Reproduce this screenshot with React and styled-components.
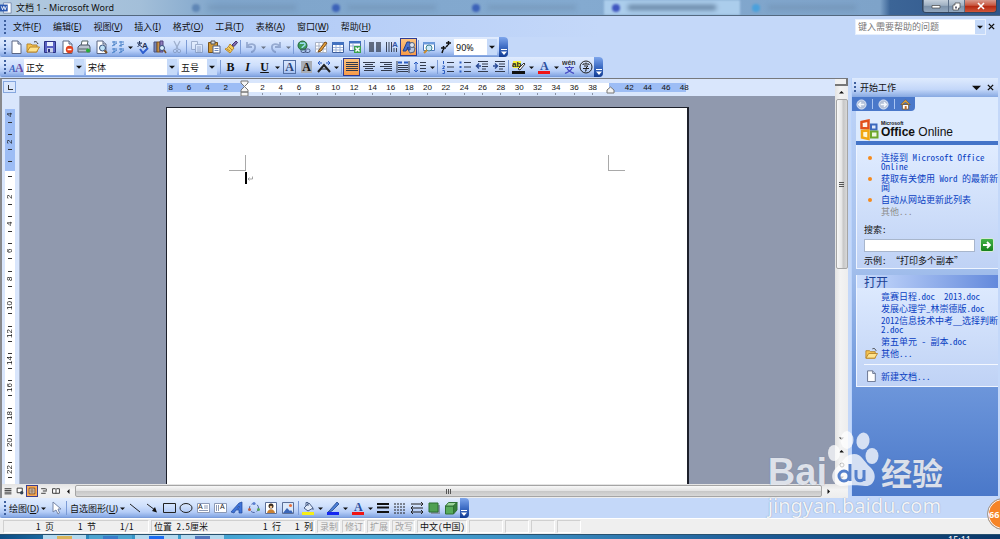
import React, { useState } from "react";
import styled, { createGlobalStyle } from "styled-components";

const uiFont = `"Noto Sans", "Noto Sans CJK SC", sans-serif`;
const songFont = `"Noto Sans Mono CJK SC", "Noto Sans CJK SC", monospace`;

const GlobalStyle = createGlobalStyle`
  * {
    box-sizing: border-box;
  }
  body {
    margin: 0;
    overflow: hidden;
    font-family: ${uiFont};
    font-size: 9px;
    color: #111;
  }
  button, input, select {
    font: inherit;
    color: inherit;
    margin: 0;
    padding: 0;
    border: 0;
    background: none;
    outline: none;
  }
  svg {
    display: block;
    flex: none;
  }
`;

const Window = styled.div`
  position: relative;
  display: flex;
  flex-direction: column;
  height: 100vh;
  overflow: hidden;
  background: #c4d8f9;
`;

/* title bar */

const TitleBar = styled.header`
  display: flex;
  height: 16px;
  flex: none;
  border-bottom: 1px solid #53687f;
  background: linear-gradient(
    90deg,
    #b4cbe0 0%,
    #a3bfd9 14%,
    #7fa5cb 22%,
    #84aad0 58%,
    #7ea3c9 88%,
    #3c6597 89%,
    #2f568a 100%
  );
`;

const TitleText = styled.h1`
  display: flex;
  align-items: center;
  gap: 4px;
  margin: 0;
  font-size: 9px;
  line-height: 15px;
  font-weight: 400;
  white-space: nowrap;
`;

const GlassTabs = styled.div`
  flex: 1;
  display: flex;
  align-items: center;
  justify-content: flex-end;
  gap: 4px;
  overflow: hidden;
`;

const GlassTab = styled.div`
  display: flex;
  align-items: center;
  gap: 8px;
  width: 136px;
  height: 15px;
  padding-left: 8px;
  background: ${(props) => (props.$active ? "#abcdec" : "transparent")};
  filter: blur(1px);

  &::before {
    content: "";
    width: 8px;
    height: 8px;
    border-radius: 4px;
    background: ${(props) => props.$dot};
  }
  &::after {
    content: "";
    width: 88px;
    height: 5px;
    background: ${(props) => (props.$active ? "#44607f" : "#66829f")};
    opacity: ${(props) => (props.$active ? 0.7 : 0.35)};
    filter: blur(2px);
  }
`;

const WindowButtons = styled.div`
  display: flex;
  height: 13px;
  margin: 0 3px 0 42px;
  border: 1px solid #33465f;
  border-top: 0;
  border-radius: 0 0 4px 4px;
  overflow: hidden;
`;

const WindowButton = styled.button`
  display: flex;
  align-items: center;
  justify-content: center;
  width: ${(props) => props.$width}px;
  border-left: 1px solid #5b6f88;
  background: ${(props) =>
    props.$close
      ? "linear-gradient(#d99a8d, #c8563f 45%, #b3260f 50%, #d0573a)"
      : "linear-gradient(#c5d0dc, #9fb0c2 45%, #7c91a9 50%, #93a8bf)"};
`;

/* menu bar */

const MenuBar = styled.nav`
  display: flex;
  align-items: center;
  height: 21px;
  flex: none;
  padding-right: 3px;
  background: linear-gradient(90deg, #a4c1f4, #c4d8f9 60%);
`;

const MenuItems = styled.div`
  display: flex;
  flex: 1;
`;

const MenuItem = styled.button`
  padding: 0 6px;
  line-height: 19px;
  white-space: nowrap;
`;

const HelpBox = styled.div`
  display: flex;
  width: 131px;
  height: 16px;
  background: #fff;
  border: 1px solid #e6effd;
`;

const HelpInput = styled.input`
  flex: 1;
  min-width: 0;
  padding-left: 2px;

  &::placeholder {
    color: #777;
    opacity: 1;
  }
`;

const ArrowButton = styled.button`
  display: flex;
  align-items: center;
  justify-content: center;
  width: ${(props) => props.$width || 10}px;
  background: ${(props) => props.$bg || "none"};
`;

/* toolbars */

const Toolbar = styled.div`
  display: flex;
  width: max-content;
  height: 20px;
  flex: none;
  border-radius: 2px 4px 4px 2px;
  overflow: hidden;
  background: linear-gradient(#e1ecfe, #cfe0fc 40%, #b4ccf7 70%, #86a8e4 94%, #6f92d2);
`;

const Grip = styled.span`
  width: 2px;
  height: ${(props) => props.$height || 14}px;
  margin: 3px 1px 3px 4px;
  background: repeating-linear-gradient(#3d5f9e 0 2px, transparent 2px 4px);
`;

const ToolButton = styled.button`
  display: flex;
  align-items: center;
  justify-content: center;
  gap: 2px;
  width: ${(props) => (props.$wide ? "auto" : "17px")};
  padding: ${(props) => (props.$wide ? "0 2px" : "0")};
  height: 18px;
  margin-top: 1px;
  white-space: nowrap;
  opacity: ${(props) => (props.disabled ? 0.5 : 1)};
  border: ${(props) => (props.$active ? "1px solid #2f3b92" : "0")};
  background: ${(props) => (props.$active ? "linear-gradient(#fdc27c, #f79a48)" : "none")};
`;

const DropButton = styled(ToolButton)`
  width: 8px;
`;

const Divider = styled.span`
  width: 1px;
  height: 14px;
  margin: 3px 1px;
  background: #7b9bd6;
`;

const Overflow = styled.button`
  display: flex;
  align-items: flex-end;
  justify-content: center;
  width: 9px;
  padding-bottom: 2px;
  background: linear-gradient(#7ea6ec, #3d6cc4 50%, #123c93);
`;

const SelectBox = styled.label`
  display: grid;
  grid-template-columns: 1fr 10px;
  align-items: center;
  width: ${(props) => props.$width}px;
  height: 16px;
  margin: 2px 2px 2px 0;
  background: linear-gradient(90deg, #fff 0 calc(100% - 10px), #c6daf9 calc(100% - 10px));
  font-family: ${uiFont};

  select {
    grid-area: 1 / 1 / 2 / 3;
    height: 16px;
    padding-left: 2px;
    appearance: none;
  }
  svg {
    grid-area: 1 / 2;
    justify-self: center;
    pointer-events: none;
  }
`;

const Letter = styled.span`
  font-family: "Liberation Serif", serif;
  font-size: 12px;
  line-height: 12px;
  font-weight: 700;
  font-style: ${(props) => (props.$italic ? "italic" : "normal")};
  text-decoration: ${(props) => (props.$underline ? "underline" : "none")};
  color: ${(props) => props.$color || "#111"};
  padding: ${(props) => (props.$boxed ? "0 1px" : "0")};
  border: ${(props) => (props.$outline ? "1px solid #5470a5" : "0")};
  background: ${(props) => (props.$shade ? "#a9adb5" : "none")};
`;

/* document area */

const Main = styled.div`
  display: flex;
  flex: 1;
  min-height: 0;
  gap: 3px;
  margin-top: 1px;
`;

const DocColumn = styled.div`
  display: flex;
  flex-direction: column;
  flex: 1;
  min-width: 0;
  border-top: 1px solid #77797d;
  border-left: 2px solid #88898c;
  background: #d9e6fc;
`;

const DocRow = styled.div`
  display: flex;
  flex: 1;
  min-height: 0;
`;

const DocBody = styled.div`
  display: flex;
  flex-direction: column;
  flex: 1;
  min-width: 0;
`;

const RulerRow = styled.div`
  display: flex;
  height: 17px;
  flex: none;
`;

const TabSelector = styled.button`
  width: 13px;
  height: 12px;
  margin: 2px 4px 0 1px;
  border: 1px solid #86a7de;
  background: #d9e6fc;

  &::before {
    content: "";
    display: block;
    width: 4px;
    height: 4px;
    margin-left: 4px;
    border-left: 1px solid #333;
    border-bottom: 1px solid #333;
  }
`;

const RulerTrack = styled.div`
  flex: 1;
  display: flex;
  justify-content: center;
  min-width: 0;
`;

const RulerScale = styled.div`
  display: grid;
  grid-template-columns: repeat(29, 1fr);
  width: 532px;
  height: 9px;
  margin-top: 4px;
  background: linear-gradient(
    90deg,
    transparent 0 1%,
    #9dbdf5 1% 15.5%,
    #fff 15.5% 84%,
    #9dbdf5 84% 98.5%,
    transparent 98.5%
  );
`;

const RulerMark = styled.span`
  display: flex;
  flex-direction: column;
  align-items: center;
  font-family: "Liberation Sans", sans-serif;
  font-size: 8px;
  line-height: 9px;
  color: #111;

  &::after {
    content: "";
    width: 1px;
    height: 2px;
    margin-top: 1px;
    background: ${(props) => (props.$tick ? "#8a93a5" : "transparent")};
  }
  svg {
    margin-top: ${(props) => (props.$low ? 3 : -3)}px;
  }
`;

const CanvasRow = styled.div`
  display: flex;
  flex: 1;
  min-height: 0;
`;

const VerticalRuler = styled.div`
  display: flex;
  flex-direction: column;
  width: 10px;
  margin: 5px 4px 0 3px;
  background: linear-gradient(transparent 0 8px, #9dbdf5 8px 70px, #fff 70px);
`;

const VerticalMark = styled.span`
  flex: 1;
  display: flex;
  flex-direction: column;
  align-items: center;
  justify-content: center;
  gap: 2px;
  min-height: 0;

  &::before,
  &::after {
    content: "";
    width: 4px;
    height: 1px;
    background: #333;
  }
  &:first-child::before {
    background: none;
  }
`;

const Rotated = styled.span`
  display: flex;
  align-items: center;
  justify-content: center;
  height: 10px;
  writing-mode: vertical-rl;
  transform: rotate(180deg);
  font-family: "Liberation Sans", sans-serif;
  font-size: 8px;
  line-height: 10px;
`;

const Canvas = styled.main`
  display: flex;
  flex: 1;
  justify-content: center;
  min-width: 0;
  padding-top: 11px;
  overflow: hidden;
  background: #9099ae;
  border-left: 1px solid #a9b5cb;
`;

const Page = styled.article`
  width: 523px;
  padding: 47px 62px 0;
  background: #fff;
  border: solid #1c1f2a;
  border-width: 1px 2px 0 1px;
`;

const MarginMarks = styled.div`
  display: flex;
  justify-content: space-between;
`;

const Corner = styled.span`
  width: 17px;
  height: 16px;
  border: solid #a9a9a9;
  border-width: ${(props) => (props.$right ? "0 0 1px 1px" : "0 1px 1px 0")};
`;

const Caret = styled.div`
  display: flex;
  align-items: center;
  height: 12px;
  margin: 1px 0 0 16px;
  border-left: 2px solid #000;
`;

/* scroll bars */

const VScroll = styled.div`
  display: flex;
  flex-direction: column;
  align-items: center;
  justify-content: space-between;
  width: 13px;
  background: linear-gradient(90deg, #e3e3e3, #f3f3f3 40%, #ededed);
`;

const VScrollTop = styled.div`
  display: flex;
  flex-direction: column;
  align-items: center;
  width: 100%;
`;

const SplitBox = styled.span`
  width: 13px;
  height: 7px;
  background: #f0f0f0;
  border: solid #777;
  border-width: 0 2px 2px 0;
`;

const ScrollButton = styled.button`
  display: flex;
  align-items: center;
  justify-content: center;
  width: 13px;
  height: 13px;
`;

const VThumb = styled.div`
  display: flex;
  align-items: center;
  justify-content: center;
  width: 12px;
  height: 170px;
  border: 1px solid #a5a5a5;
  border-radius: 2px;
  background: linear-gradient(90deg, #f8f8f8, #e4e4e4 50%, #c6c6c6 60%, #d8d8d8);
`;

const ScrollNav = styled.div`
  display: flex;
  flex-direction: column;
`;

const HScroll = styled.div`
  display: flex;
  align-items: center;
  height: 14px;
  flex: none;
  background: linear-gradient(#e3e3e3, #f3f3f3 40%, #ededed);
`;

const ViewButton = styled.button`
  display: flex;
  align-items: center;
  justify-content: center;
  width: 12px;
  height: 12px;
  border: 1px solid ${(props) => (props.$active ? "#3b3f91" : "transparent")};
  background: ${(props) => (props.$active ? "#f9a954" : "none")};
`;

const HThumb = styled.div`
  flex: 1;
  display: flex;
  align-items: center;
  justify-content: center;
  height: 12px;
  border: 1px solid #a5a5a5;
  border-radius: 2px;
  background: linear-gradient(#f8f8f8, #e4e4e4 45%, #c8c8c8 55%, #d8d8d8);
`;

/* task pane */

const Pane = styled.aside`
  display: flex;
  flex-direction: column;
  width: 147px;
  margin: 0 2px 2px 0;
  border-left: 1px solid #b9d2fb;
  background: linear-gradient(#c0d5f9, #a3bfec 45%, #6f98dc 72%, #4a78c9);
`;

const PaneHeader = styled.div`
  display: flex;
  align-items: center;
  height: 19px;
  gap: 4px;
  padding-right: 3px;
  background: linear-gradient(#dfebfe, #c3d7f9 60%, #87a9e2);

  ${Grip} {
    margin: 0 0 0 2px;
  }
`;

const PaneTitle = styled.h2`
  flex: 1;
  margin: 0;
  font-family: ${songFont};
  font-size: 9px;
  font-weight: 400;
  line-height: 18px;
`;

const PaneNav = styled.div`
  display: flex;
  height: 14px;
  background: #dceafe;
`;

const NavTab = styled.div`
  display: flex;
  align-items: center;
  gap: 4px;
  width: 63px;
  padding-left: 4px;
  border-radius: 0 0 4px 0;
  background: #4a78ca;
`;

const NavLine = styled.span`
  width: 1px;
  height: 10px;
  margin: 0 1px;
  background: #a9c4f2;
`;

const PlainButton = styled.button`
  display: flex;
  align-items: center;
  justify-content: center;
  min-width: 10px;
`;

const Brand = styled.div`
  display: flex;
  align-items: center;
  gap: 1px;
  height: 34px;
  margin-left: 4px;
  padding: 7px 0 0 4px;
  border-bottom: 4px solid #4474c8;
  background: #dceafe;
`;

const BrandText = styled.div`
  display: flex;
  flex-direction: column;
  font-family: "Liberation Sans", sans-serif;
  color: #111;
`;

const BrandSmall = styled.span`
  font-size: 5px;
  line-height: 5px;
  font-weight: 700;
`;

const BrandLarge = styled.span`
  font-size: 12px;
  line-height: 12px;
  white-space: nowrap;
`;

const Card = styled.section`
  margin: 0 0 ${(props) => props.$gap || 0}px 4px;
  padding: ${(props) => (props.$titled ? "0" : "8px 0 2px")};
  border: solid #eef4ff;
  border-width: 0 0 1px 1px;
  background: linear-gradient(#e0ecff, #bfd2f5);
  font-family: ${songFont};
`;

const CardTitle = styled.h3`
  margin: 0 0 4px;
  padding-left: 7px;
  font-family: ${songFont};
  font-size: 12px;
  line-height: 13px;
  font-weight: 400;
  color: #1c3f94;
  background: linear-gradient(90deg, #cbddfd, #6389dc);
`;

const LinkList = styled.ul`
  display: flex;
  flex-direction: column;
  gap: ${(props) => props.$gap}px;
  margin: 0;
  padding: 0;
  list-style: none;
`;

const LinkItem = styled.li`
  display: grid;
  grid-template-columns: 12px 1fr;
  column-gap: 4px;
  padding-left: 8px;
  line-height: 9px;
`;

const Bullet = styled.span`
  width: 4px;
  height: 4px;
  margin: 3px 0 0 3px;
  border-radius: 2px;
  background: #f58a1c;
`;

const IconSlot = styled.span`
  display: block;
  height: 9px;

  svg {
    margin-top: -2px;
  }
`;

const PaneLink = styled.a`
  color: ${(props) => (props.$muted ? "#8d8d8d" : "#0a3fc2")};
  text-decoration: none;
  white-space: pre-wrap;
  overflow-wrap: anywhere;
`;

const SearchForm = styled.form`
  display: flex;
  flex-direction: column;
  gap: 3px;
  padding: 8px 4px 0 7px;
  line-height: 11px;
`;

const SearchRow = styled.div`
  display: flex;
  align-items: center;
  gap: 5px;
`;

const SearchInput = styled.input`
  flex: 1;
  min-width: 0;
  height: 13px;
  background: #fff;
  border: 1px solid #a8b6cc;
`;

const GoButton = styled.button`
  display: flex;
  align-items: center;
  justify-content: center;
  width: 14px;
  height: 14px;
  border: 1px solid #d6ead6;
  border-radius: 2px;
  background: linear-gradient(#43b247, #17821c);
`;

const Rule = styled.hr`
  margin: 6px 0 7px 7px;
  border: 0;
  border-top: 1px solid #f4f8ff;
`;

const CardFoot = styled.div`
  padding-bottom: 5px;
`;

/* status bar and task bar */

const StatusBar = styled.footer`
  display: flex;
  align-items: center;
  gap: 2px;
  height: 16px;
  flex: none;
  padding-left: 3px;
  border-top: 1px solid #fff;
  background: #efefef;
  font-family: ${songFont};
`;

const StatusCell = styled.div`
  display: flex;
  align-items: center;
  gap: ${(props) => props.$gap || 0}px;
  min-width: ${(props) => props.$width}px;
  height: 13px;
  padding: 0 1px 0 ${(props) => props.$indent || 2}px;
  border: 1px solid;
  border-color: #d0d0d0 #fff #fff #d0d0d0;
  white-space: pre;
  color: ${(props) => (props.$off ? "#a2a2a2" : "#111")};
`;

const Push = styled.span`
  margin-left: auto;
`;

const TaskBar = styled.div`
  display: flex;
  gap: 3px;
  height: 5px;
  flex: none;
  padding: 0 29px 0 43px;
  overflow: hidden;
  border-top: 1px solid #27516f;
  background: radial-gradient(ellipse at 20px 6px, #b9cfdd 0 10px, transparent 14px),
    linear-gradient(90deg, #0d4c84, #2f8fc4 10%, #53b1dc 30%, #3f93c6 50%, #1d5c97 75%, #0a3768);
`;

const TaskButton = styled.span`
  width: 43px;
  padding: 1px 14px 0;
  background: ${(props) => (props.$open ? "#b5d9ee" : "#4da4d0")};

  &::before {
    content: "";
    display: block;
    height: 4px;
    background: ${(props) => props.$color};
  }
`;

const Clock = styled.time`
  margin-left: auto;
  line-height: 9px;
  color: #fff;
`;

const Bubble = styled.button`
  position: absolute;
  right: -19px;
  bottom: 9px;
  width: 32px;
  height: 32px;
  padding-left: 1px;
  text-align: left;
  border-radius: 16px;
  border: 1px solid #9b9b9b;
  color: #fff;
  font-weight: 700;
  background: #f68426;
  box-shadow: inset 0 0 0 1px #fff;
`;

const Watermark = styled.div`
  position: absolute;
  right: 57px;
  bottom: 20px;
  display: flex;
  flex-direction: column;
  color: rgba(255, 255, 255, 0.78);
  pointer-events: none;
  text-shadow: 0 0 1px rgba(90, 110, 150, 0.8);
`;

const WatermarkTop = styled.div`
  display: flex;
  align-items: flex-end;
  height: 57px;
  margin-bottom: 6px;
`;

const WatermarkBai = styled.span`
  font-family: "Liberation Sans", sans-serif;
  font-size: 38px;
  line-height: 38px;
  height: 34px;
  font-weight: 700;
`;

const WatermarkCn = styled.span`
  margin-left: 2px;
  font-family: "Noto Sans CJK SC", sans-serif;
  font-size: 31px;
  line-height: 31px;
  font-weight: 700;
`;

const WatermarkUrl = styled.span`
  font-size: 20px;
  line-height: 26px;
  color: rgba(255, 255, 255, 0.92);
`;

const Triangle = ({ dir = "down", size = 5, color = "#111" }) => {
  const shapes = {
    down: "M0 3h10L5 8z",
    up: "M0 7h10L5 2z",
    left: "M7 0v10L2 5z",
    right: "M3 0v10l5-5z",
  };
  return (
    <svg width={size} height={size} viewBox="0 0 10 10" aria-hidden="true">
      <path d={shapes[dir]} fill={color} />
    </svg>
  );
};

const sheet = (
  <>
    <path d="M3 1h6l3 3v9.500H3z" fill="#fff" stroke="#5a6683" />
    <path d="M9 1v3h3" fill="#cbd8ee" stroke="#5a6683" />
  </>
);

const lines = (rows) => (
  <path d={rows.map(([x, y, w]) => `M${x} ${y}h${w}`).join("")} stroke="#333b4d" strokeWidth="1" />
);

const icons = {
  new: sheet,
  open: (
    <>
      <path d="M1 12V4h4l1 1h5v7z" fill="#f5c451" stroke="#b8862c" />
      <path d="M1 12l3-5h9.500l-3 5z" fill="#ffe38d" stroke="#b8862c" />
      <path d="M8 2c2-1 3 0 4 2" stroke="#333" fill="none" />
    </>
  ),
  save: (
    <>
      <path d="M1.500 1.500h11v11h-11z" fill="#5a62c4" stroke="#2b3184" />
      <path d="M4 2h6v4H4z" fill="#e9efff" />
      <path d="M4 8h6v4.500H4z" fill="#c9d1ea" />
      <path d="M5 9h2v3H5z" fill="#2b3184" />
    </>
  ),
  permission: (
    <>
      {sheet}
      <circle cx="9.500" cy="9.500" r="3.700" fill="#e2401d" />
      <path d="M7.500 9.500h4" stroke="#fff" strokeWidth="1.500" />
    </>
  ),
  print: (
    <>
      <path d="M4 6l1-5h6l-1 5z" fill="#fff" stroke="#566" />
      <path d="M1 7l2-2h9l1 2v5H1z" fill="#b9c2cf" stroke="#4a5467" />
      <path d="M2 9h9" stroke="#566" />
      <circle cx="11" cy="10.500" r="2" fill="#27ae35" />
    </>
  ),
  preview: (
    <>
      {sheet}
      <circle cx="8.500" cy="8" r="3" fill="#bfe2f7" stroke="#35507c" />
      <path d="M10.500 10.500L13 13" stroke="#7a5225" strokeWidth="2" />
    </>
  ),
  translate: (
    <>
      <path d="M1 2h5M3 1v5M1 6l5-3M8 2h5M10 1v6M8 6l5-2M1 9h5M3 8v5M1 13l5-3M8 9h5M10 8v5M8 13l5-3" stroke="#4c83c9" fill="none" />
    </>
  ),
  spelling: (
    <>
      <path d="M1 3h5M3.500 1v3M1.500 7l4-4M2 4l4 3" stroke="#26365c" fill="none" />
      <text x="6" y="8" fontSize="8" fontWeight="700" fontFamily="Liberation Sans" fill="#26365c">A</text>
      <path d="M4 9l3 4 5-5" stroke="#2f5fd0" strokeWidth="2" fill="none" />
    </>
  ),
  research: (
    <>
      <path d="M1 2h3v10H1z" fill="#7585b7" stroke="#47517f" />
      <path d="M4 2h3v10H4z" fill="#c89347" stroke="#7c5521" />
      <path d="M7 1h3v11H7z" fill="#8f7fbd" stroke="#51437f" />
      <circle cx="9" cy="8" r="2.500" fill="#d9eefb" stroke="#35507c" />
      <path d="M11 10l2 3" stroke="#7a5225" strokeWidth="1.500" />
    </>
  ),
  cut: (
    <>
      <path d="M4 1l4 8M10 1L6 9" stroke="#6d7f9f" strokeWidth="1.300" />
      <circle cx="5" cy="11" r="1.700" fill="none" stroke="#6d7f9f" />
      <circle cx="9" cy="11" r="1.700" fill="none" stroke="#6d7f9f" />
    </>
  ),
  copy: (
    <>
      <path d="M1.500 1.500h6v8h-6z" fill="#eef3fc" stroke="#6d7f9f" />
      <path d="M5.500 4.500h7v8h-7z" fill="#eef3fc" stroke="#6d7f9f" />
      <path d="M7 7h4M7 9h4M7 11h4" stroke="#6d7f9f" />
    </>
  ),
  paste: (
    <>
      <path d="M1.500 2.500h9v10h-9z" fill="#d39a35" stroke="#79531a" />
      <path d="M4 1h4v3H4z" fill="#d7dbe3" stroke="#555" />
      <path d="M6 6h7v7H6z" fill="#fff" stroke="#4d5f86" />
      <path d="M7.500 8.500h4M7.500 10.500h4" stroke="#6d86ba" />
    </>
  ),
  painter: (
    <>
      <path d="M8 5l4-4 1.500 1.500-3.500 4z" fill="#7e6bb0" stroke="#43346e" />
      <path d="M6 4l4 4-4 5-5-4c2 0 4-3 5-5z" fill="#f2cd60" stroke="#b8862c" />
      <path d="M3 9l3 2M5 7l3 3" stroke="#b8862c" />
    </>
  ),
  undo: <path d="M3 2v5h5M3 7c2-4 9-4 8 1 0 2-2 4-4 4" fill="none" stroke="#5e76a6" strokeWidth="1.800" />,
  redo: <path d="M11 2v5H6M11 7C9 3 2 3 3 8c0 2 2 4 4 4" fill="none" stroke="#5e76a6" strokeWidth="1.800" />,
  link: (
    <>
      <circle cx="5.500" cy="5.500" r="4.500" fill="#3d9b58" stroke="#22663b" />
      <path d="M3 3c2 1 4-1 5 1s-3 2-3 4" stroke="#9adcf2" fill="none" strokeWidth="1.500" />
      <rect x="4" y="9" width="5" height="3.500" rx="1.700" fill="none" stroke="#465981" />
      <rect x="8" y="9" width="5" height="3.500" rx="1.700" fill="none" stroke="#465981" />
    </>
  ),
  tablesBorders: (
    <>
      <path d="M1.500 2.500h11v10h-11zM5 2.500v10M9 2.500v10M1.500 6h11M1.500 9h11" fill="#fff" stroke="#a9b3c6" />
      <path d="M5 10l6-8 2 1-6 8-3 1z" fill="#e9a23a" stroke="#7b4c18" />
    </>
  ),
  table: (
    <>
      <path d="M1.500 2.500h11v10h-11z" fill="#fff" stroke="#3f5f9c" />
      <path d="M1 2h12v3H1z" fill="#4271c0" />
      <path d="M5 5v7M9 5v7M2 7.500h10M2 10h10" stroke="#9bb1d8" />
    </>
  ),
  excel: (
    <>
      <path d="M1.500 1.500h11v9h-11z" fill="#fff" stroke="#4a6ba6" />
      <path d="M1 1h12v2.500H1z" fill="#4271c0" />
      <path d="M5 3v7M2 6h10" stroke="#9bb1d8" />
      <path d="M6 6h7v7H6z" fill="#3ba24d" />
      <path d="M7.500 7.500l4 4M11.500 7.500l-4 4" stroke="#fff" strokeWidth="1.500" />
    </>
  ),
  columns: (
    <path d="M1 3h5M1 5h5M1 7h5M1 9h5M1 11h5M8 3h5M8 5h5M8 7h5M8 9h5M8 11h5" stroke="#3b4457" strokeWidth="1.300" />
  ),
  textDirection: (
    <>
      <path d="M1.500 2v10M4 2v10M6.500 2v10M9 8v4M11.500 8v4" stroke="#3b4457" />
      <text x="7" y="7" fontSize="8" fontWeight="700" fontFamily="Liberation Sans" fill="#3558a8">A</text>
    </>
  ),
  drawing: (
    <>
      <path d="M5 8l4-2 4 2-1 4-4 1z" fill="#b8c5dd" stroke="#53617d" />
      <path d="M1 11L5 2h3v8H6V7L4 11z" fill="#4b72cf" stroke="#233f8a" />
      <circle cx="10" cy="5" r="2.500" fill="#dce3ef" stroke="#53617d" />
    </>
  ),
  map: (
    <>
      <path d="M1.500 2.500h11v8h-11z" fill="#fff" stroke="#4a78ba" />
      <path d="M1 2h12v2.500H1z" fill="#6c9adb" />
      <circle cx="7" cy="8" r="3" fill="#cdeafa" stroke="#3d8290" />
      <path d="M5 10l-3 3" stroke="#c98c2b" strokeWidth="2" />
    </>
  ),
  marks: (
    <>
      <path d="M7 3h5M9.500 1v4M2 8h5M4.500 6v4" stroke="#111" strokeWidth="1.500" />
      <path d="M9 5L7 7M4 10l-1 3" stroke="#111" strokeWidth="1.500" />
    </>
  ),
  styles: (
    <>
      <text x="0" y="12" fontSize="10" fontStyle="italic" fontWeight="700" fontFamily="Liberation Serif" fill="#3f64bf">A</text>
      <text x="6" y="12" fontSize="12" fontWeight="700" fontFamily="Liberation Serif" fill="#6a4ea5">A</text>
    </>
  ),
  charScale: (
    <>
      <path d="M1 12l6-7 6 7" stroke="#222" strokeWidth="2" fill="none" />
      <path d="M4 9h6" stroke="#222" />
      <path d="M1 3h4M9 3h4M3 1L1 3l2 2M11 1l2 2-2 2" stroke="#2c5cc0" fill="none" />
    </>
  ),
  justify: lines([[1, 2.5, 12], [1, 4.5, 12], [1, 6.5, 12], [1, 8.5, 12], [1, 10.5, 12]]),
  center: lines([[1, 2.5, 12], [3, 4.5, 8], [1, 6.5, 12], [3, 8.5, 8], [2, 10.5, 10]]),
  right: lines([[1, 2.5, 12], [5, 4.5, 8], [1, 6.5, 12], [5, 8.5, 8], [2, 10.5, 11]]),
  distribute: (
    <>
      {lines([[2, 5.5, 10], [2, 7.5, 10], [2, 9.5, 10], [2, 11.5, 10]])}
      <path d="M1 1v12M13 1v12" stroke="#333b4d" />
      <path d="M2 2.500h4M8 2.500h4" stroke="#2c5cc0" strokeWidth="2" />
    </>
  ),
  spacing: (
    <>
      {lines([[7, 2.5, 6], [7, 5.5, 6], [7, 8.5, 6], [7, 11.5, 6]])}
      <path d="M3 2v10M1 4l2-2 2 2M1 10l2 2 2-2" stroke="#2c5cc0" fill="none" />
    </>
  ),
  numbers: (
    <>
      {lines([[6, 2.5, 7], [6, 7, 7], [6, 11.5, 7]])}
      <path d="M2.500 1v3M1.500 6h2v1l-2 1.500h2M1.500 10.500h2v3h-2" stroke="#2c5cc0" fill="none" />
    </>
  ),
  bullets: (
    <>
      {lines([[6, 2.5, 7], [6, 7, 7], [6, 11.5, 7]])}
      <path d="M1.500 1.500h2v2h-2zM1.500 6h2v2h-2zM1.500 10.500h2v2h-2z" fill="#2c5cc0" />
    </>
  ),
  outdent: (
    <>
      {lines([[3, 1.5, 10], [7, 4, 6], [7, 6.5, 6], [7, 9, 4], [3, 11.5, 10]])}
      <path d="M6 6H2M4 3.500L1.500 6 4 8.500" stroke="#2c4c96" strokeWidth="1.500" fill="none" />
    </>
  ),
  indent: (
    <>
      {lines([[3, 1.5, 10], [7, 4, 6], [7, 6.5, 6], [7, 9, 4], [3, 11.5, 10]])}
      <path d="M1 6h4M3 3.500L5.500 6 3 8.500" stroke="#2c4c96" strokeWidth="1.500" fill="none" />
    </>
  ),
  highlight: (
    <>
      <path d="M1 1h8v7H1z" fill="#f5ef3c" />
      <text x="0" y="7" fontSize="8" fontWeight="700" fontFamily="Liberation Sans" fill="#222">ab</text>
      <path d="M6 9l6-6 1 1-5 6z" fill="#fff" stroke="#333" />
      <path d="M0 11h13v3H0z" fill="#111" />
    </>
  ),
  fontColor: (
    <>
      <text x="3" y="10" fontSize="12" fontWeight="700" fontFamily="Liberation Serif" fill="#2c4f9e">A</text>
      <path d="M1 11h12v3H1z" fill="#f01414" />
    </>
  ),
  pinyin: (
    <>
      <text x="0" y="5" fontSize="7" fontWeight="700" fontFamily="Liberation Sans" fill="#333">wén</text>
      <path d="M3 7.500h9M7.500 6v1.500M5 8c1 3 4 4 7 5.500M10 8c-1 3-4 4-7 5.500" stroke="#4a4fc4" fill="none" strokeWidth="1.200" />
    </>
  ),
  enclose: (
    <>
      <circle cx="7" cy="7" r="6" fill="none" stroke="#222" />
      <path d="M4 5V4h6v1M5 6h4L7 8v3H6M4 8.500h6M7 2.500V4" stroke="#222" fill="none" />
    </>
  ),
  pointer: <path d="M4 1v10l3-2 2 4 1.500-1L9 8h3z" fill="#fff" stroke="#7484a6" />,
  line: <path d="M2 3l10 8" stroke="#222" />,
  arrow: (
    <>
      <path d="M2 3l8 6" stroke="#222" />
      <path d="M12 11.500L7 10l3-4z" fill="#111" />
    </>
  ),
  rect: <path d="M1.500 2.500h12v9h-12z" fill="none" stroke="#222" />,
  oval: <ellipse cx="7" cy="7" rx="6" ry="4.500" fill="none" stroke="#222" />,
  textBox: (
    <>
      <path d="M1.500 2.500h12v9h-12z" fill="#fff" stroke="#8b99b5" />
      <text x="2" y="8" fontSize="7" fontFamily="Liberation Sans" fill="#222">A</text>
      <path d="M8 5h4M8 7h4M3 9.500h9" stroke="#8b99b5" />
    </>
  ),
  verticalText: (
    <>
      <path d="M1.500 2.500h12v9h-12z" fill="#fff" stroke="#8b99b5" />
      <text x="7" y="8" fontSize="7" fontFamily="Liberation Sans" fill="#222">A</text>
      <path d="M3.500 4v6M5.500 4v6" stroke="#8b99b5" />
    </>
  ),
  wordArt: <path d="M1 11L9 2l3-1v11H9V9H6l-2 3zM7.500 7H9V5z" fill="#3f74d8" stroke="#21479b" strokeWidth="0.700" />,
  diagram: (
    <>
      <circle cx="7" cy="7" r="4.500" fill="none" stroke="#4d63a3" strokeDasharray="4 2" />
      <circle cx="7" cy="2.500" r="1.500" fill="#5a7fd1" />
      <circle cx="2.500" cy="8.500" r="1.500" fill="#c35b3a" />
      <circle cx="11.500" cy="8.500" r="1.500" fill="#5aa659" />
    </>
  ),
  clipArt: (
    <>
      <path d="M1.500 1.500h11v11h-11z" fill="#fff" stroke="#5b6f98" />
      <circle cx="7" cy="5" r="2.500" fill="#3a2c20" />
      <path d="M3 12c1-5 7-5 8 0z" fill="#c98134" />
      <circle cx="7" cy="6" r="1.300" fill="#f0bf8b" />
    </>
  ),
  picture: (
    <>
      <path d="M1.500 1.500h11v11h-11z" fill="#dbe9fb" stroke="#5b6f98" />
      <path d="M2 12l4-5 3 3 1-1 2 3z" fill="#3b66b8" />
      <circle cx="9.500" cy="4.500" r="1.500" fill="#e8703a" />
    </>
  ),
  fill: (
    <>
      <path d="M3 7l5-5 4 5-5 3z" fill="#e3ecfa" stroke="#4d6188" />
      <path d="M5 5V1.500h2V5M12 7v2" stroke="#4d6188" fill="none" />
      <path d="M1 11h12v3H1z" fill="#f6ee17" />
    </>
  ),
  lineColor: (
    <>
      <path d="M4 9l7-8 2 2-7 7-4 1z" fill="#4b7fd6" stroke="#27498b" strokeWidth="0.800" />
      <path d="M1 11h12v3H1z" fill="#1527f0" />
    </>
  ),
  lineStyle: <path d="M1 3h12M1 6.500h12M1 11h12" stroke="#111" strokeWidth="2" />,
  dashStyle: <path d="M1 3h12M1 6h12M1 9h12M1 12h12" stroke="#222" strokeDasharray="2 1" />,
  arrowStyle: (
    <path d="M1 3h12M11 1l2 2-2 2M1 7h12M3 5L1 7l2 2M1 11h12M11 9l2 2-2 2M3 9l-2 2 2 2" stroke="#222" fill="none" />
  ),
  shadow: (
    <>
      <path d="M4 4h9v9H4z" fill="#8593ab" />
      <path d="M2 2h9v9H2z" fill="#4fa053" stroke="#2b6c31" />
    </>
  ),
  cube: (
    <>
      <path d="M1.500 5h8v8h-8z" fill="#57ab5b" stroke="#2f7135" />
      <path d="M1.500 5l3-3.500H13L9.500 5z" fill="#9bd39a" stroke="#2f7135" />
      <path d="M9.500 13V5L13 1.500V9z" fill="#357e3b" stroke="#2f7135" />
    </>
  ),
  home: (
    <>
      <path d="M3 7h8v6H3z" fill="#fff" stroke="#6b4a1e" />
      <path d="M1 7l6-6 6 6H11L7 4 3 7z" fill="#f2b13c" stroke="#6b4a1e" strokeWidth="0.700" />
      <path d="M6 9h2.500v4H6z" fill="#c2702a" />
    </>
  ),
  normalView: <path d="M1 3h12M1 6h12M1 9h12M1 12h12" stroke="#222" strokeWidth="1.500" />,
  webView: (
    <>
      <path d="M2 2h9v8H2z" fill="#fff" stroke="#222" strokeWidth="1.500" />
      <circle cx="10" cy="10" r="3" fill="#345" />
    </>
  ),
  printView: <path d="M2 2h10v10H2zM4 5h6M4 7h6M4 9h6" fill="#fff" stroke="#6b3b10" strokeWidth="1.500" />,
  outlineView: <path d="M2 3h8M5 7h7M2 11h8M11 3v3" stroke="#222" strokeWidth="1.500" fill="none" />,
  readView: <path d="M1 3h5l1 1 1-1h5v8H8l-1 1-1-1H1zM7 4v8" fill="#fff" stroke="#222" strokeWidth="1.500" />,
  returnMark: <path d="M11 3v5H2M5 5L2 8l3 3" stroke="#8a8a8a" strokeWidth="1.500" fill="none" />,
  word: (
    <>
      <path d="M4 1h9v12H4z" fill="#fff" stroke="#7286ad" />
      <path d="M0 3h9v8H0z" fill="#2a58b0" />
      <path d="M1.500 5l1.500 4 1.500-4L6 9l1.500-4" stroke="#fff" fill="none" />
    </>
  ),
};

const Icon = ({ name, size = 14 }) => (
  <svg width={size} height={size} viewBox="0 0 14 14" fill="none" aria-hidden="true">
    {icons[name]}
  </svg>
);

const Cross = ({ size = 7, color = "#111" }) => (
  <svg width={size} height={size} viewBox="0 0 8 8" aria-hidden="true">
    <path d="M1 1l6 6M7 1L1 7" stroke={color} strokeWidth="1.600" />
  </svg>
);

const NavCircle = ({ flip }) => (
  <svg width="11" height="11" viewBox="0 0 12 12" aria-hidden="true">
    <circle cx="6" cy="6" r="5" fill="#b3c0d8" stroke="#dfe8f8" />
    <path
      d={flip ? "M3 6h6M6.500 3.500L9 6 6.500 8.500" : "M9 6H3M5.500 3.500L3 6l2.500 2.500"}
      stroke="#f5f9ff"
      strokeWidth="1.500"
      fill="none"
    />
  </svg>
);

const OfficeLogo = () => (
  <svg width="20" height="22" viewBox="0 0 20 22" aria-hidden="true">
    <path d="M1.500 3l7-1.500v8l-7-.5z" fill="#fff3ea" stroke="#e2501b" strokeWidth="2.500" />
    <path d="M11 5.500h5.500v5H11z" fill="#dfe9fb" stroke="#3b68bd" strokeWidth="2" />
    <path d="M2 12l6.500-.5V20L2 18.500z" fill="#fff7d6" stroke="#f2a712" strokeWidth="2.500" />
    <path d="M11 12.500h6.500v6H11z" fill="#eef7df" stroke="#6da72c" strokeWidth="2" />
  </svg>
);

const Paw = () => (
  <svg width="52" height="57" viewBox="0 0 52 57" aria-hidden="true">
    <g fill="#fff" fillOpacity="0.75">
      <ellipse cx="7" cy="23" rx="6" ry="8" />
      <ellipse cx="20" cy="10" rx="6.500" ry="9" />
      <ellipse cx="36" cy="11" rx="6.500" ry="8.500" transform="rotate(10 36 11)" />
      <ellipse cx="45" cy="26" rx="6.500" ry="8" />
      <path d="M27 24c8 0 10 8 16 13 9 8 4 20-5 19-5-1-17-1-22 0-9 1-15-10-7-18 6-5 9-14 18-14z" />
    </g>
    <g fill="none" stroke="#5580cb" strokeWidth="3">
      <circle cx="17" cy="46" r="5" />
      <path d="M23 34v17M29 40v7c0 5 8 5 8 0v-7M37 40v11" />
    </g>
  </svg>
);

const ScrollLines = ({ vertical }) => (
  <svg width="7" height="7" viewBox="0 0 7 7" aria-hidden="true">
    <path d={vertical ? "M1.500 1v5M3.500 1v5M5.500 1v5" : "M1 1.500h5M1 3.500h5M1 5.500h5"} stroke="#555" />
  </svg>
);

const menus = [
  ["文件", "F"],
  ["编辑", "E"],
  ["视图", "V"],
  ["插入", "I"],
  ["格式", "O"],
  ["工具", "T"],
  ["表格", "A"],
  ["窗口", "W"],
  ["帮助", "H"],
];

const standardTools = [
  "new", "open", "save", "permission", "print", "preview", "translate", "drop",
  "spelling", "research", "cut*", "|",
  "copy*", "paste", "painter", "|",
  "undo*", "drop*", "redo*", "drop*", "|",
  "link", "tablesBorders", "table", "excel", "|",
  "columns", "textDirection", "drawing!", "|",
  "map", "marks",
];

const paragraphTools = [
  "charScale", "drop", "|",
  "justify!", "center", "right", "distribute", "spacing", "drop", "|",
  "numbers", "bullets", "outdent", "indent", "|",
  "highlight", "drop", "fontColor", "drop", "pinyin", "enclose",
];

const drawTools = [
  "line", "arrow", "rect", "oval", "textBox", "verticalText", "wordArt", "diagram",
  "clipArt", "picture", "|",
  "fill", "drop", "lineColor", "drop", "fontColor", "drop",
  "lineStyle", "dashStyle", "arrowStyle", "shadow", "cube",
];

const recentFiles = [
  "竟赛日程.doc  2013.doc",
  "发展心理学_林崇德版.doc",
  "2012信息技术中考＿选择判断2.doc",
  "第五单元 - 副本.doc",
];

const horizontalMarks = Array.from({ length: 29 }, (_, i) => (i - 4) * 2);
const verticalMarks = Array.from({ length: 14 }, (_, i) => (i - 2) * 2);
const views = ["normalView", "webView", "printView", "outlineView", "readView"];

const Tools = ({ items }) =>
  items.map((item, index) => {
    const name = item.replace(/[*!]/, "");
    const disabled = item.endsWith("*");
    if (name === "|") return <Divider key={index} />;
    if (name === "drop") {
      return (
        <DropButton key={index} aria-label="more" disabled={disabled}>
          <Triangle />
        </DropButton>
      );
    }
    return (
      <ToolButton key={index} aria-label={name} disabled={disabled} $active={item.endsWith("!")}>
        <Icon name={name} />
      </ToolButton>
    );
  });

const ToolSelect = ({ label, width, value }) => (
  <SelectBox $width={width}>
    <select aria-label={label} defaultValue={value}>
      <option>{value}</option>
    </select>
    <Triangle size={6} />
  </SelectBox>
);

const OverflowButton = () => (
  <Overflow aria-label="toolbar options">
    <svg width="6" height="6" viewBox="0 0 6 6" aria-hidden="true">
      <path d="M0 .5h6" stroke="#fff" />
      <path d="M0 2.500h6L3 6z" fill="#fff" />
    </svg>
  </Overflow>
);

const HorizontalRuler = () => (
  <RulerRow>
    <TabSelector aria-label="tab" />
    <RulerTrack>
      <RulerScale>
        {horizontalMarks.map((mark) => {
          if (mark === 0) {
            return (
              <RulerMark key={mark}>
                <svg width="9" height="17" viewBox="0 0 9 17" aria-hidden="true">
                  <path d="M1 1h7v2L4.500 6.500 1 3zM1 12v-2l3.500-3.500L8 10v2zM1 12h7v4H1z" fill="#f4f4f4" stroke="#777" />
                </svg>
              </RulerMark>
            );
          }
          if (mark === 40) {
            return (
              <RulerMark key={mark} $low>
                <svg width="9" height="8" viewBox="0 0 9 8" aria-hidden="true">
                  <path d="M1 7V4l3.500-3L8 4v3z" fill="#f4f4f4" stroke="#777" />
                </svg>
              </RulerMark>
            );
          }
          return (
            <RulerMark key={mark} $tick={mark > 0 && mark < 40}>
              {Math.abs(mark)}
            </RulerMark>
          );
        })}
      </RulerScale>
    </RulerTrack>
  </RulerRow>
);

const TaskPane = () => (
  <Pane>
    <PaneHeader>
      <Grip $height={12} />
      <PaneTitle>开始工作</PaneTitle>
      <PlainButton aria-label="other panes">
        <Triangle size={9} />
      </PlainButton>
      <PlainButton aria-label="close pane">
        <Cross />
      </PlainButton>
    </PaneHeader>
    <PaneNav>
      <NavTab>
        <PlainButton aria-label="back">
          <NavCircle />
        </PlainButton>
        <NavLine />
        <PlainButton aria-label="forward">
          <NavCircle flip />
        </PlainButton>
        <NavLine />
        <PlainButton aria-label="home">
          <Icon name="home" size={11} />
        </PlainButton>
      </NavTab>
    </PaneNav>
    <Brand>
      <OfficeLogo />
      <BrandText>
        <BrandSmall>Microsoft</BrandSmall>
        <BrandLarge>
          <b>Office</b> Online
        </BrandLarge>
      </BrandText>
    </Brand>
    <Card $gap={6}>
      <LinkList $gap={3}>
        <LinkItem>
          <Bullet />
          <PaneLink href="#connect">连接到 Microsoft Office Online</PaneLink>
        </LinkItem>
        <LinkItem>
          <Bullet />
          <PaneLink href="#news">获取有关使用 Word 的最新新闻</PaneLink>
        </LinkItem>
        <LinkItem>
          <Bullet />
          <PaneLink href="#update">自动从网站更新此列表</PaneLink>
        </LinkItem>
        <LinkItem>
          <span />
          <PaneLink href="#more" $muted>
            其他...
          </PaneLink>
        </LinkItem>
      </LinkList>
      <SearchForm onSubmit={(e) => e.preventDefault()}>
        <label htmlFor="pane-search">搜索:</label>
        <SearchRow>
          <SearchInput id="pane-search" type="text" />
          <GoButton aria-label="search">
            <svg width="10" height="10" viewBox="0 0 10 10" aria-hidden="true">
              <path d="M1 5h7M5 2l3 3-3 3" stroke="#fff" strokeWidth="1.800" fill="none" />
            </svg>
          </GoButton>
        </SearchRow>
        <span>示例: “打印多个副本”</span>
      </SearchForm>
    </Card>
    <Card $titled>
      <CardTitle>打开</CardTitle>
      <LinkList $gap={3}>
        {recentFiles.map((name) => (
          <LinkItem key={name}>
            <span />
            <PaneLink href="#doc">{name}</PaneLink>
          </LinkItem>
        ))}
        <LinkItem>
          <IconSlot>
            <Icon name="open" size={13} />
          </IconSlot>
          <PaneLink href="#browse">其他...</PaneLink>
        </LinkItem>
      </LinkList>
      <Rule />
      <CardFoot>
        <LinkList $gap={3}>
          <LinkItem>
            <IconSlot>
              <Icon name="new" size={12} />
            </IconSlot>
            <PaneLink href="#create">新建文档...</PaneLink>
          </LinkItem>
        </LinkList>
      </CardFoot>
    </Card>
  </Pane>
);

const App = () => {
  const [view, setView] = useState("printView");

  return (
    <Window>
      <GlobalStyle />
      <TitleBar>
        <TitleText>
          <Icon name="word" size={12} />
          文档 1 - Microsoft Word
        </TitleText>
        <GlassTabs>
          <GlassTab $dot="#5f86b5" />
          <GlassTab $dot="#3c62b8" />
          <GlassTab $dot="#3c62b8" />
          <GlassTab $dot="#3f56c0" $active />
          <GlassTab $dot="#4aa0dc" />
        </GlassTabs>
        <WindowButtons>
          <WindowButton $width={25} aria-label="minimize">
            <svg width="10" height="5" viewBox="0 0 10 5" aria-hidden="true">
              <path d="M1 1.500h8v2.500H1z" fill="#fff" stroke="#444" strokeWidth="0.700" />
            </svg>
          </WindowButton>
          <WindowButton $width={16} aria-label="restore">
            <svg width="9" height="9" viewBox="0 0 9 9" aria-hidden="true">
              <path d="M3 1h5v5H6.500v2H1V3h2z" fill="#fff" stroke="#444" strokeWidth="0.700" />
              <path d="M3 4.500h2v2H3z" fill="#667" />
            </svg>
          </WindowButton>
          <WindowButton $width={32} $close aria-label="close">
            <Cross size={8} color="#fff" />
          </WindowButton>
        </WindowButtons>
      </TitleBar>

      <MenuBar>
        <Grip $height={14} />
        <MenuItems>
          {menus.map(([name, key]) => (
            <MenuItem key={key}>
              {name}(<u>{key}</u>)
            </MenuItem>
          ))}
        </MenuItems>
        <HelpBox>
          <HelpInput aria-label="help" placeholder="键入需要帮助的问题" />
          <ArrowButton $bg="#c6daf9" aria-label="questions">
            <Triangle size={6} />
          </ArrowButton>
        </HelpBox>
        <ArrowButton $width={11} aria-label="close document">
          <Cross size={7} />
        </ArrowButton>
      </MenuBar>

      <Toolbar>
        <Grip />
        <Tools items={standardTools} />
        <ToolSelect label="zoom" width={43} value="90%" />
        <OverflowButton />
      </Toolbar>
      <Toolbar>
        <Grip />
        <Tools items={["styles"]} />
        <ToolSelect label="style" width={60} value="正文" />
        <ToolSelect label="font" width={91} value="宋体" />
        <ToolSelect label="size" width={38} value="五号" />
        <Divider />
        <ToolButton>
          <Letter>B</Letter>
        </ToolButton>
        <ToolButton>
          <Letter $italic>I</Letter>
        </ToolButton>
        <ToolButton>
          <Letter $underline>U</Letter>
        </ToolButton>
        <Tools items={["drop"]} />
        <ToolButton>
          <Letter $boxed $outline $color="#2a4374">
            A
          </Letter>
        </ToolButton>
        <ToolButton>
          <Letter $boxed $shade>
            A
          </Letter>
        </ToolButton>
        <Tools items={paragraphTools} />
        <OverflowButton />
      </Toolbar>

      <Main>
        <DocColumn>
          <DocRow>
            <DocBody>
              <HorizontalRuler />
              <CanvasRow>
                <VerticalRuler>
                  {verticalMarks.map((mark) => (
                    <VerticalMark key={mark}>
                      <Rotated>{mark === 0 ? "" : Math.abs(mark)}</Rotated>
                    </VerticalMark>
                  ))}
                </VerticalRuler>
                <Canvas>
                  <Page>
                    <MarginMarks>
                      <Corner />
                      <Corner $right />
                    </MarginMarks>
                    <Caret>
                      <Icon name="returnMark" size={7} />
                    </Caret>
                  </Page>
                </Canvas>
              </CanvasRow>
            </DocBody>
            <VScroll>
              <VScrollTop>
                <SplitBox />
                <ScrollButton aria-label="scroll up">
                  <Triangle dir="up" />
                </ScrollButton>
                <VThumb>
                  <ScrollLines />
                </VThumb>
              </VScrollTop>
              <ScrollNav>
                <ScrollButton aria-label="scroll down">
                  <Triangle />
                </ScrollButton>
                <ScrollButton aria-label="previous page">
                  <Triangle dir="up" />
                </ScrollButton>
                <ScrollButton aria-label="browse object">
                  <svg width="6" height="6" viewBox="0 0 6 6" aria-hidden="true">
                    <circle cx="3" cy="3" r="2" fill="none" stroke="#222" />
                  </svg>
                </ScrollButton>
                <ScrollButton aria-label="next page">
                  <Triangle />
                </ScrollButton>
              </ScrollNav>
            </VScroll>
          </DocRow>
          <HScroll>
            {views.map((name) => (
              <ViewButton key={name} aria-label={name} $active={view === name} onClick={() => setView(name)}>
                <Icon name={name} size={8} />
              </ViewButton>
            ))}
            <ScrollButton aria-label="scroll left">
              <Triangle dir="left" />
            </ScrollButton>
            <HThumb>
              <ScrollLines vertical />
            </HThumb>
            <ScrollButton aria-label="scroll right">
              <Triangle dir="right" />
            </ScrollButton>
            <ScrollButton as="span" />
          </HScroll>
        </DocColumn>
        <TaskPane />
      </Main>

      <Toolbar>
        <Grip />
        <ToolButton $wide>
          <span>
            绘图(<u>D</u>)
          </span>
          <Triangle />
        </ToolButton>
        <Tools items={["pointer", "|"]} />
        <ToolButton $wide>
          <span>
            自选图形(<u>U</u>)
          </span>
          <Triangle />
        </ToolButton>
        <Tools items={drawTools} />
        <OverflowButton />
      </Toolbar>

      <StatusBar>
        <StatusCell $width={146} $indent={32} $gap={24}>
          <span>1 页</span>
          <span>1 节</span>
          <span>1/1</span>
        </StatusCell>
        <StatusCell $width={164} $gap={14}>
          <span>位置 2.5厘米</span>
          <Push>1 行</Push>
          <span>1 列</span>
        </StatusCell>
        <StatusCell $off $width={23}>录制</StatusCell>
        <StatusCell $off $width={23}>修订</StatusCell>
        <StatusCell $off $width={23}>扩展</StatusCell>
        <StatusCell $off $width={23}>改写</StatusCell>
        <StatusCell $width={50}>中文(中国)</StatusCell>
        <StatusCell $width={34} />
        <StatusCell $width={24} />
        <StatusCell $width={24} />
        <StatusCell $width={24} />
      </StatusBar>

      <TaskBar>
        <TaskButton $open $color="#d9b45a" />
        <TaskButton $color="#3a7cc9" />
        <TaskButton $open $color="#1c6df0" />
        <TaskButton $open $color="#5377bd" />
        <Clock>15:11</Clock>
      </TaskBar>

      <Watermark>
        <WatermarkTop>
          <WatermarkBai>Bai</WatermarkBai>
          <Paw />
          <WatermarkCn>经验</WatermarkCn>
        </WatermarkTop>
        <WatermarkUrl>jingyan.baidu.com</WatermarkUrl>
      </Watermark>
      <Bubble aria-label="speed">66</Bubble>
    </Window>
  );
};

export default App;
